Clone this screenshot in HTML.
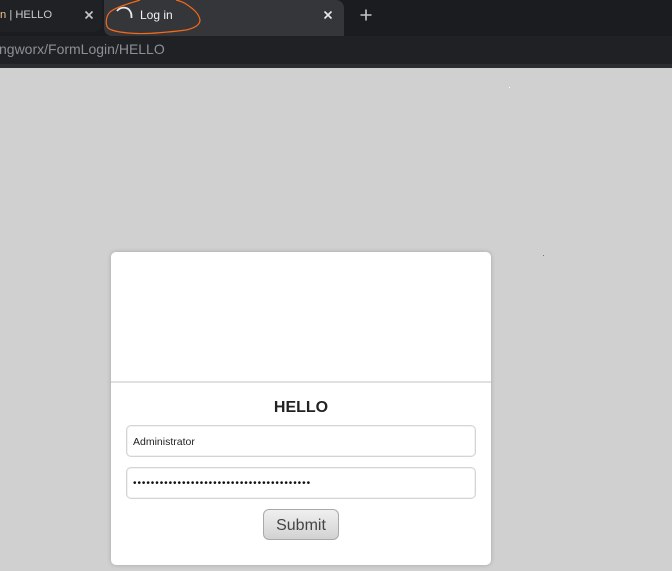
<!DOCTYPE html>
<html>
<head>
<meta charset="utf-8">
<style>
html,body{margin:0;padding:0;width:672px;height:571px;overflow:hidden;background:#d0d0d0;font-family:"Liberation Sans",sans-serif}
.a{position:absolute}
#strip{left:0;top:0;width:672px;height:36px;background:#1b1c1f}
#itab{left:0;top:0;width:102px;height:32px;background:#202124;border-radius:0 0 8px 0}
#atab{left:104px;top:0;width:240px;height:36px;background:#35363a;border-radius:0 8px 0 8px}
#bar{left:0;top:36px;width:672px;height:28px;background:#202124}
#bar2{left:0;top:64px;width:672px;height:4px;background:#2c2d30}
.t{white-space:nowrap;font-size:12px;line-height:16px}
#card{left:111px;top:252px;width:380px;height:313px;background:#fff;border-radius:5px;box-shadow:0 0 5px rgba(0,0,0,.2)}
#div{left:111px;top:381px;width:380px;height:2px;background:#e0e0e0}
.inp{left:126px;width:348px;height:30px;border:1px solid #d4d4d4;border-radius:5px;background:#fff;box-shadow:inset 0 0 0 .5px #e6e6e6}
#btn{left:263px;top:509px;width:74px;height:29px;border:1px solid #a9a9a9;border-radius:6px;background:linear-gradient(#f0f0f0,#d2d2d2);color:#444;font-size:16px;line-height:32px;text-align:center}
</style>
</head>
<body>
<div class="a" id="strip"></div>
<div class="a" id="itab"></div>
<div class="a" id="atab"></div>
<div class="a" id="bar"></div>
<div class="a" id="bar2"></div>

<div class="a t" style="left:0;top:7px;color:#c8cacd;width:60px;overflow:hidden;font-size:11.200px"><span style="color:#e8c78c">n</span> | HELLO</div>
<div class="a t" style="left:140px;top:7px;color:#f1f3f4">Log in</div>
<div class="a t" style="left:-1px;top:41px;color:#8c9096;font-size:14px">ngworx/FormLogin/HELLO</div>

<svg class="a" style="left:0;top:0" width="672" height="40" viewBox="0 0 672 40" fill="none">
<path d="M85.500 11.500L92.500 18.500M92.500 11.500L85.500 18.500" stroke="#c4c6c9" stroke-width="1.600"/>
<path d="M324.500 11.500L331.500 18.500M331.500 11.500L324.500 18.500" stroke="#e8eaed" stroke-width="1.600"/>
<path d="M366 9.500V20.500M360.500 15H371.500" stroke="#c4c6c9" stroke-width="1.600"/>
<path d="M117 11C120 7 127 6 130 11C131.500 13 131.500 15 131.500 18" stroke="#e8eaed" stroke-width="1.800"/>
<path d="M140 0C128 4 116 7 110 12C106 16 105 24 108 28C113 32 125 33 137 33.500C152 34 170 32 186 30C195 28 200 25 200 20C199 13 192 8 186 4C183 2 180 1 176 0" stroke="#f26a1b" stroke-width="1.200"/>
</svg>

<div class="a" id="card"></div>
<div class="a" id="div"></div>
<div class="a" style="left:111px;top:398px;width:380px;text-align:center;font-size:16px;line-height:20px;font-weight:bold;color:#222">HELLO</div>
<div class="a inp" style="top:425px"></div>
<div class="a t" style="left:133px;top:434px;font-size:10.500px;color:#222">Administrator</div>
<div class="a inp" style="top:467px"></div>
<div class="a t" style="left:133px;top:476px;font-size:10px;letter-spacing:.95px;color:#111">••••••••••••••••••••••••••••••••••••••••</div>
<div class="a" id="btn">Submit</div>

<div class="a" style="left:509px;top:87px;width:1px;height:1px;background:#fff"></div>
<div class="a" style="left:543px;top:255px;width:1px;height:1px;background:#9a6a40"></div>
</body>
</html>
